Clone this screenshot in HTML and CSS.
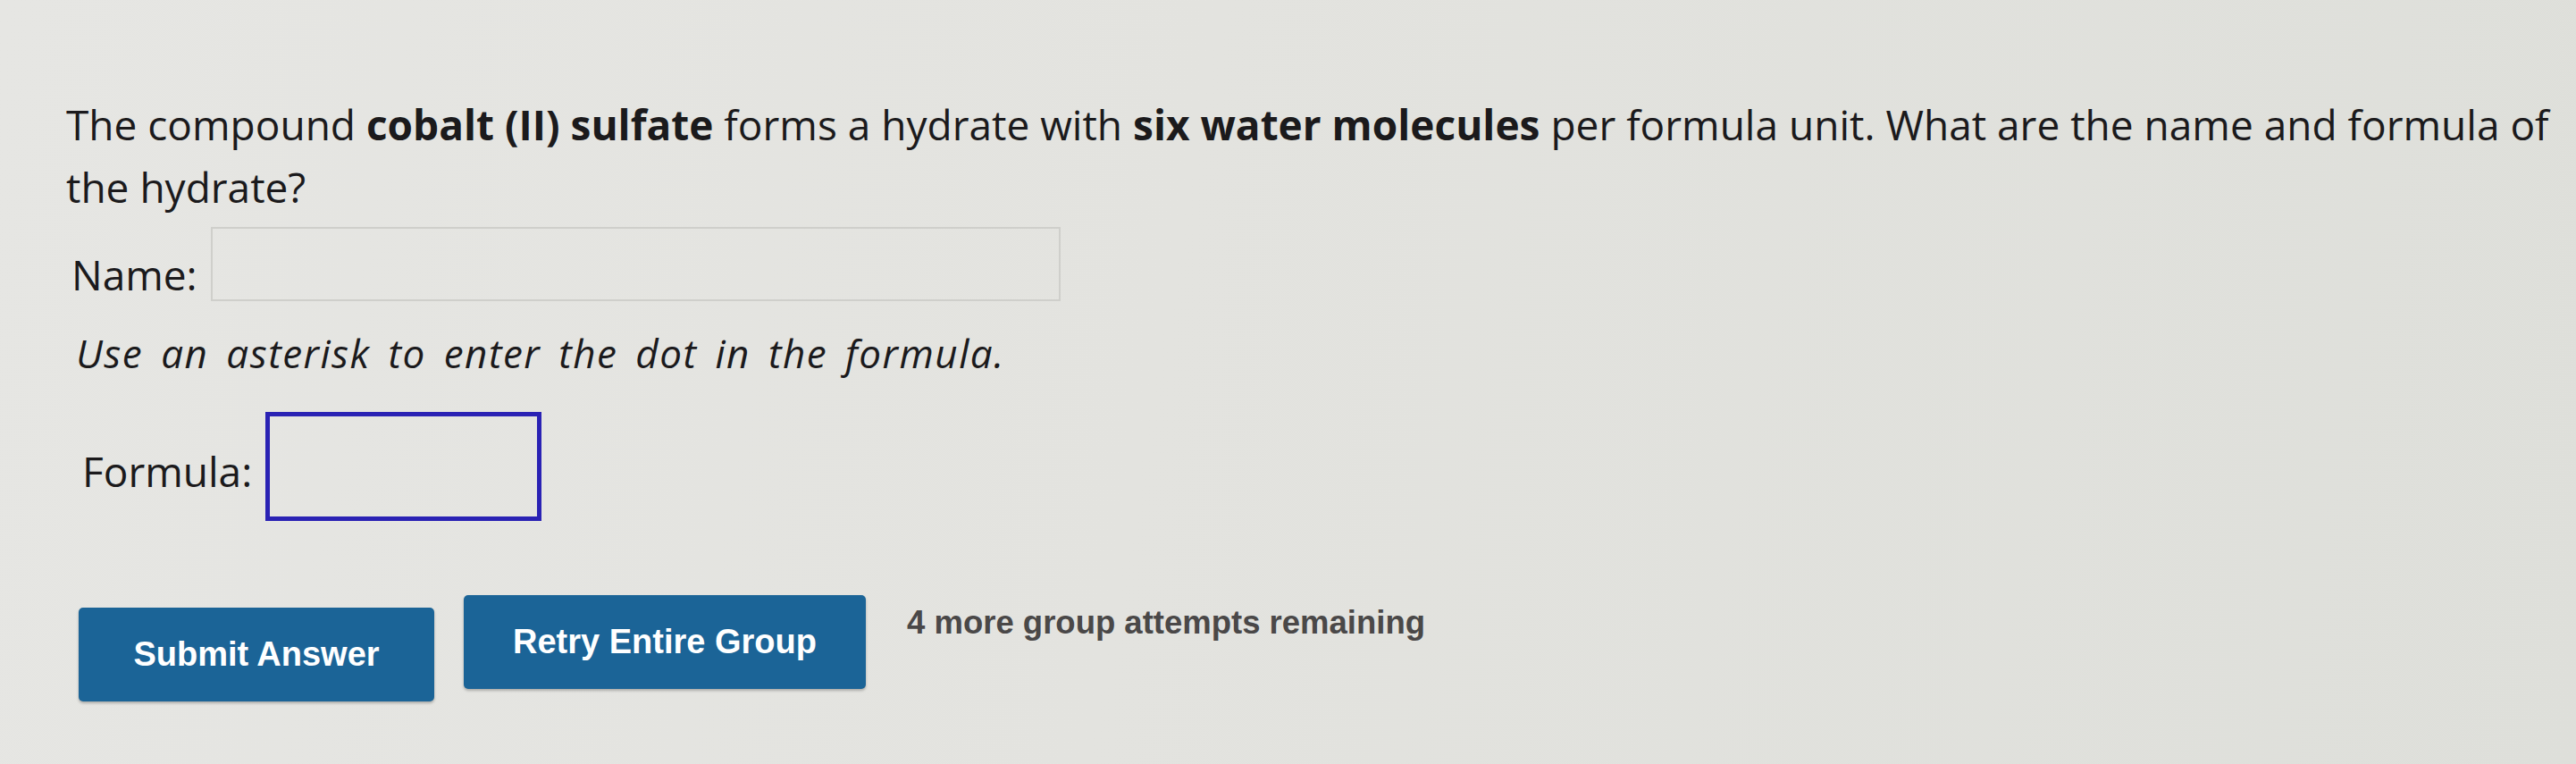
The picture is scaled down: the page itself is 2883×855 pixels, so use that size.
FILE: index.html
```html
<!DOCTYPE html>
<html lang="en">
<head>
<meta charset="utf-8">
<title>Hydrate question</title>
<link rel="stylesheet" href="styles.css">
</head>
<body>
<main class="question">
  <p class="prompt">The compound <b>cobalt (II) sulfate</b> forms a hydrate with <b>six water molecules</b> per formula unit. What are the name and formula of the hydrate?</p>
  <div class="field name-field">
    <label class="label" for="name">Name:</label>
    <input class="text-input name-input" id="name" type="text">
  </div>
  <p class="hint">Use an asterisk to enter the dot in the formula.</p>
  <div class="field formula-field">
    <label class="label" for="formula">Formula:</label>
    <input class="text-input formula-input" id="formula" type="text">
  </div>
  <div class="actions">
    <button class="btn submit" type="button">Submit Answer</button>
    <button class="btn retry" type="button">Retry Entire Group</button>
    <span class="attempts">4 more group attempts remaining</span>
  </div>
</main>
</body>
</html>
```
FILE: styles.css
```css
html, body {
  margin: 0;
  padding: 0;
}
body {
  width: 2883px;
  height: 855px;
  overflow: hidden;
  background: linear-gradient(100deg, #e6e6e3 0%, #e3e3df 45%, #dedfda 100%);
  font-family: "Open Sans", "Noto Sans", sans-serif;
  color: #1b1a1c;
}
.question {
  padding: 104px 0 0 74px;
  width: 2800px;
  box-sizing: border-box;
  display: flex;
  flex-direction: column;
  align-items: flex-start;
}
.prompt {
  margin: 0;
  font-size: 46px;
  line-height: 70px;
  width: 2800px;
}
.prompt b {
  font-weight: 700;
}
.field {
  display: flex;
  align-items: center;
  gap: 15px;
}
.label {
  font-size: 46px;
  line-height: 60px;
}
.name-field {
  margin-top: 10px;
  margin-left: 6px;
}
.name-field .label {
  margin-top: 22px;
}
.text-input {
  box-sizing: border-box;
  margin: 0;
  background: transparent;
  font: inherit;
  outline: none;
}
.name-input {
  width: 951px;
  height: 83px;
  border: 2px solid #cfcfcb;
}
.hint {
  margin: 28px 0 0 11px;
  font-size: 44px;
  line-height: 60px;
  font-style: italic;
  letter-spacing: 1.5px;
  word-spacing: 7px;
}
.formula-field {
  margin-top: 36px;
  margin-left: 18px;
}
.formula-field .label {
  margin-top: 10px;
}
.formula-input {
  width: 309px;
  height: 122px;
  border: 5px solid #2a22b4;
}
.actions {
  margin-top: 83px;
  margin-left: 14px;
  display: flex;
  align-items: flex-start;
  gap: 33px;
}
.btn {
  border: none;
  border-radius: 5px;
  background: #1b6497;
  color: #ffffff;
  font-family: "Liberation Sans", Arial, sans-serif;
  font-weight: 700;
  font-size: 38px;
  height: 105px;
  padding: 0;
  box-shadow: 0 2px 3px rgba(0, 0, 0, 0.25);
}
.submit {
  width: 398px;
  margin-top: 14px;
}
.retry {
  width: 450px;
}
.attempts {
  margin-top: 10px;
  margin-left: 13px;
  font-family: "Liberation Sans", Arial, sans-serif;
  font-weight: 700;
  font-size: 36.5px;
  line-height: 42px;
  color: #4a4848;
}
```
